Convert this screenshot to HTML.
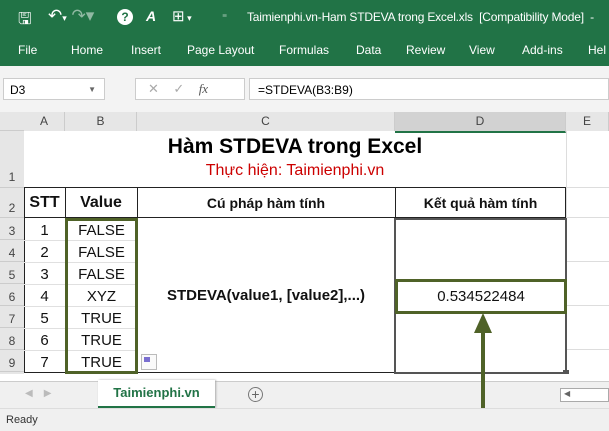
<!DOCTYPE html><html><head><style>
*{margin:0;padding:0;box-sizing:border-box}
body{width:609px;height:431px;overflow:hidden;font-family:"Liberation Sans",sans-serif;background:#fff;position:relative}
.a{position:absolute;white-space:nowrap}
.t{color:#fff;font-size:12px}
.ch{background:#e6e6e6;color:#444;font-size:12px;text-align:center;line-height:19px;border-right:1px solid #ccc}
.rh{background:#e6e6e6;color:#444;font-size:12px;text-align:center;border-bottom:1px solid #ccc;width:24px;left:0}
.c{font-size:15px;text-align:center;color:#111}
.g{border-bottom:1px solid #e0e0e0}
</style></head><body>
<div class="a" style="left:0;top:0;width:609px;height:66px;background:#217346"></div>
<div class="a t" style="left:18px;top:8px;font-size:16px">&#128427;</div>
<div class="a t" style="left:48px;top:6px;font-size:17px">↶<span style="font-size:9px">▾</span> <span style="opacity:.5">↷▾</span></div>
<div class="a" style="left:117px;top:9px;width:16px;height:16px;border-radius:50%;background:#fff;color:#217346;font-weight:bold;font-size:12px;text-align:center;line-height:16px">?</div>
<div class="a t" style="left:146px;top:8px;font-size:14px;font-style:italic;font-weight:bold">A</div>
<div class="a t" style="left:172px;top:7px;font-size:15px">⊞<span style="font-size:9px"> ▾</span></div>
<div class="a t" style="left:222px;top:9px;font-size:10px">₌</div>
<div class="a t" style="left:247px;top:10px;font-size:12px;letter-spacing:-0.2px">Taimienphi.vn-Ham STDEVA trong Excel.xls&nbsp; [Compatibility Mode]&nbsp; -</div>
<div class="a t" style="left:18px;top:43px">File</div>
<div class="a t" style="left:71px;top:43px">Home</div>
<div class="a t" style="left:131px;top:43px">Insert</div>
<div class="a t" style="left:187px;top:43px">Page Layout</div>
<div class="a t" style="left:279px;top:43px">Formulas</div>
<div class="a t" style="left:356px;top:43px">Data</div>
<div class="a t" style="left:406px;top:43px">Review</div>
<div class="a t" style="left:469px;top:43px">View</div>
<div class="a t" style="left:522px;top:43px">Add-ins</div>
<div class="a t" style="left:588px;top:43px">Hel</div>
<div class="a" style="left:0;top:66px;width:609px;height:46px;background:#f3f3f3"></div>
<div class="a" style="left:3px;top:78px;width:102px;height:22px;background:#fff;border:1px solid #ccc;font-size:12px;padding:4px 6px">D3<span style="position:absolute;right:8px;font-size:8px;color:#666;top:6px">▼</span></div>
<div class="a" style="left:135px;top:78px;width:110px;height:22px;background:#fff;border:1px solid #ccc;color:#aaa;font-size:13px;padding:2px 12px">✕&nbsp;&nbsp;&nbsp; ✓&nbsp;&nbsp;&nbsp; <i style="color:#555;font-family:'Liberation Serif'">fx</i></div>
<div class="a" style="left:249px;top:78px;width:360px;height:22px;background:#fff;border:1px solid #ccc;font-size:12px;padding:4px 8px">=STDEVA(B3:B9)</div>
<div class="a" style="left:0;top:112px;width:609px;height:19px;background:#e6e6e6;border-bottom:1px solid #ccc"></div>
<div class="a ch" style="left:24px;top:112px;width:41px">A</div>
<div class="a ch" style="left:65px;top:112px;width:72px">B</div>
<div class="a ch" style="left:137px;top:112px;width:258px">C</div>
<div class="a ch" style="left:395px;top:112px;width:171px;background:#d2d2d2;border-bottom:2px solid #217346">D</div>
<div class="a ch" style="left:566px;top:112px;width:43px">E</div>
<div class="a rh" style="top:131px;height:57px;line-height:92px">1</div>
<div class="a rh" style="top:188px;height:30px;line-height:40px">2</div>
<div class="a rh" style="top:218px;height:22px;line-height:26px">3</div>
<div class="a rh" style="top:240px;height:22px;line-height:26px">4</div>
<div class="a rh" style="top:262px;height:22px;line-height:26px">5</div>
<div class="a rh" style="top:284px;height:22px;line-height:26px">6</div>
<div class="a rh" style="top:306px;height:22px;line-height:26px">7</div>
<div class="a rh" style="top:328px;height:22px;line-height:26px">8</div>
<div class="a rh" style="top:350px;height:22px;line-height:26px">9</div>
<div class="a rh" style="top:372px;height:10px;line-height:20px">10</div>
<div class="a" style="left:566px;top:131px;width:1px;height:251px;background:#ddd"></div>
<div class="a" style="left:566px;top:187px;width:43px;height:1px;background:#ddd"></div>
<div class="a" style="left:566px;top:217px;width:43px;height:1px;background:#ddd"></div>
<div class="a" style="left:566px;top:261px;width:43px;height:1px;background:#ddd"></div>
<div class="a" style="left:566px;top:305px;width:43px;height:1px;background:#ddd"></div>
<div class="a" style="left:566px;top:349px;width:43px;height:1px;background:#ddd"></div>
<div class="a" style="left:24px;top:135px;width:542px;text-align:center;font-weight:bold;font-size:21px">Hàm STDEVA trong Excel</div>
<div class="a" style="left:24px;top:162px;width:542px;text-align:center;color:#c00;font-size:16px">Thực hiện: Taimienphi.vn</div>
<div class="a" style="left:24px;top:187px;width:542px;height:186px;border:1px solid #222"></div>
<div class="a" style="left:24px;top:217px;width:542px;height:1px;background:#222"></div>
<div class="a" style="left:65px;top:187px;width:1px;height:186px;background:#222"></div>
<div class="a" style="left:137px;top:187px;width:1px;height:186px;background:#222"></div>
<div class="a" style="left:395px;top:187px;width:1px;height:186px;background:#222"></div>
<div class="a c" style="left:24px;top:194px;width:41px;font-weight:bold;font-size:16px">STT</div>
<div class="a c" style="left:65px;top:194px;width:72px;font-weight:bold;font-size:16px">Value</div>
<div class="a c" style="left:137px;top:195px;width:258px;font-weight:bold;font-size:14px">Cú pháp hàm tính</div>
<div class="a c" style="left:395px;top:195px;width:171px;font-weight:bold;font-size:14px">Kết quả hàm tính</div>
<div class="a" style="left:24px;top:219px">
<div class="a c g" style="left:0;top:0;width:41px;height:22px;line-height:24px">1</div>
<div class="a c g" style="left:0;top:22px;width:41px;height:22px;line-height:24px">2</div>
<div class="a c g" style="left:0;top:44px;width:41px;height:22px;line-height:24px">3</div>
<div class="a c g" style="left:0;top:66px;width:41px;height:22px;line-height:24px">4</div>
<div class="a c g" style="left:0;top:88px;width:41px;height:22px;line-height:24px">5</div>
<div class="a c g" style="left:0;top:110px;width:41px;height:22px;line-height:24px">6</div>
<div class="a c" style="left:0;top:132px;width:41px;height:22px;line-height:24px">7</div>
</div>
<div class="a" style="left:65px;top:218px;width:73px;height:156px;border:3px solid #4f6228"></div>
<div class="a" style="left:68px;top:219px">
<div class="a c g" style="left:0;top:0;width:67px;height:22px;line-height:24px">FALSE</div>
<div class="a c g" style="left:0;top:22px;width:67px;height:22px;line-height:24px">FALSE</div>
<div class="a c g" style="left:0;top:44px;width:67px;height:22px;line-height:24px">FALSE</div>
<div class="a c g" style="left:0;top:66px;width:67px;height:22px;line-height:24px">XYZ</div>
<div class="a c g" style="left:0;top:88px;width:67px;height:22px;line-height:24px">TRUE</div>
<div class="a c g" style="left:0;top:110px;width:67px;height:22px;line-height:24px">TRUE</div>
<div class="a c" style="left:0;top:132px;width:67px;height:22px;line-height:24px">TRUE</div>
</div>
<div class="a" style="left:141px;top:354px;width:16px;height:16px;border:1px solid #bbb;background:#fafafa"><div style="margin:2px;width:6px;height:5px;background:#7a6fd0"></div></div>
<div class="a c" style="left:137px;top:287px;width:258px;font-weight:bold;font-size:15px">STDEVA(value1, [value2],...)</div>
<div class="a" style="left:394px;top:218px;width:173px;height:156px;border:2px solid #555"></div>
<div class="a c" style="left:395px;top:279px;width:172px;height:35px;border:3px solid #4f6228;background:#fff;line-height:30px">0.534522484</div>
<div class="a" style="left:563px;top:370px;width:6px;height:6px;background:#555"></div>
<div class="a" style="left:0;top:374px;width:609px;height:8px;background:#fff"></div>
<div class="a" style="left:0;top:381px;width:609px;height:27px;background:#f0f0f0;border-top:1px solid #ccc"></div>
<div class="a" style="left:25px;top:388px;color:#bbb;font-size:10px">◀&nbsp;&nbsp;&nbsp; ▶</div>
<div class="a" style="left:98px;top:380px;width:117px;height:28px;background:#fff;border-bottom:2px solid #217346;box-shadow:1px 0 2px #aaa;font-weight:bold;color:#217346;font-size:13px;text-align:center;line-height:26px">Taimienphi.vn</div>
<div class="a" style="left:248px;top:387px;width:15px;height:15px;border:1px solid #777;border-radius:50%;text-align:center;line-height:12px;color:#666;font-size:14px">+</div>
<div class="a" style="left:560px;top:388px;width:49px;height:14px;border:1px solid #aaa;background:#fff;font-size:8px;color:#666;padding-left:3px">◀</div>
<div class="a" style="left:0;top:408px;width:609px;height:23px;background:#f0f0f0;border-top:1px solid #ddd;font-size:11px;color:#333;padding:5px 6px">Ready</div>
<div class="a" style="left:481px;top:330px;width:4px;height:78px;background:#4f6228"></div>
<div class="a" style="left:474px;top:313px;width:0;height:0;border-left:9px solid transparent;border-right:9px solid transparent;border-bottom:20px solid #4f6228"></div>
</body></html>
